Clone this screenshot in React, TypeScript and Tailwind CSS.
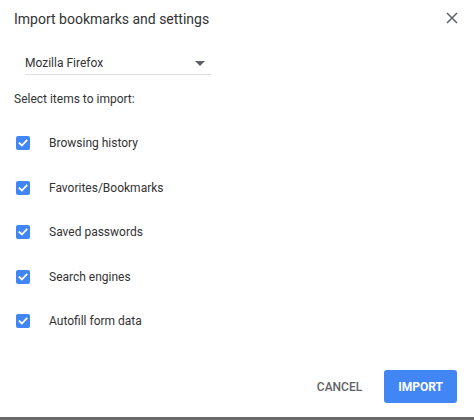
import { useState } from "react";

type ImportItem = {
  id: string;
  label: string;
};

const importItems: ImportItem[] = [
  { id: "history", label: "Browsing history" },
  { id: "bookmarks", label: "Favorites/Bookmarks" },
  { id: "passwords", label: "Saved passwords" },
  { id: "search", label: "Search engines" },
  { id: "autofill", label: "Autofill form data" },
];

function CheckBox({ checked }: { checked: boolean }) {
  return (
    <span
      className={
        checked
          ? "flex h-[14px] w-[14px] items-center justify-center rounded-[2px] bg-[#4285f4]"
          : "flex h-[14px] w-[14px] items-center justify-center rounded-[2px] border-2 border-[#5f6368]"
      }
    >
      {checked ? (
        <svg aria-hidden="true" fill="none" height="12" viewBox="0 0 12 12" width="12">
          <path
            d="M2.5 6.2 4.9 8.5 9.6 3.6"
            stroke="white"
            strokeLinecap="square"
            strokeWidth="1.8"
          />
        </svg>
      ) : null}
    </span>
  );
}

export default function App() {
  const [selected, setSelected] = useState<Record<string, boolean>>(() =>
    Object.fromEntries(importItems.map((item) => [item.id, true])),
  );

  const toggle = (id: string) =>
    setSelected((current) => ({ ...current, [id]: !current[id] }));

  return (
    <div className="flex h-[420px] w-[474px] flex-col bg-white font-['Roboto',sans-serif] text-[#333]">
      <div className="flex flex-1 flex-col">
        <div className="flex items-start justify-between pl-[14px] pr-[15px] pt-[9px]">
          <h1 className="text-[14px] leading-[20px] text-[#333]">
            Import bookmarks and settings
          </h1>
          <button className="mt-[2px] text-[#5f6368]" type="button" aria-label="Close">
            <svg aria-hidden="true" fill="none" height="14" viewBox="0 0 14 14" width="14">
              <path
                d="M2 2 12 12M12 2 2 12"
                stroke="currentColor"
                strokeWidth="1.5"
              />
            </svg>
          </button>
        </div>

        <div className="ml-[25px] mt-[26px] flex w-[186px] items-center justify-between border-b border-[#e0e0e0] pb-[3px]">
          <span className="text-[12px] leading-[16px]">Mozilla Firefox</span>
          <svg
            aria-hidden="true"
            className="mr-[6px]"
            fill="none"
            height="5"
            viewBox="0 0 10 5"
            width="10"
          >
            <path d="M0 0h10L5 5Z" fill="#5f6368" />
          </svg>
        </div>

        <p className="ml-[14px] mt-[16px] text-[12px] leading-[16px]">
          Select items to import:
        </p>

        <ul className="mt-[14px]">
          {importItems.map((item) => (
            <li key={item.id}>
              <button
                className="flex h-[44.5px] w-full items-center pl-[16px] text-left"
                onClick={() => toggle(item.id)}
                type="button"
              >
                <CheckBox checked={selected[item.id]} />
                <span className="ml-[19px] text-[12px] leading-[16px]">
                  {item.label}
                </span>
              </button>
            </li>
          ))}
        </ul>

        <div className="mt-auto flex items-center justify-end gap-[8px] pb-[14px] pr-[17px]">
          <button
            className="h-[33px] rounded-[2px] px-[14px] text-[12px] font-medium text-[#5f6368]"
            type="button"
          >
            CANCEL
          </button>
          <button
            className="h-[33px] rounded-[3px] bg-[#4285f4] px-[14px] text-[12px] font-bold text-white"
            type="button"
          >
            IMPORT
          </button>
        </div>
      </div>
      <div className="h-[3px] bg-[#6b6b6b]" />
    </div>
  );
}
